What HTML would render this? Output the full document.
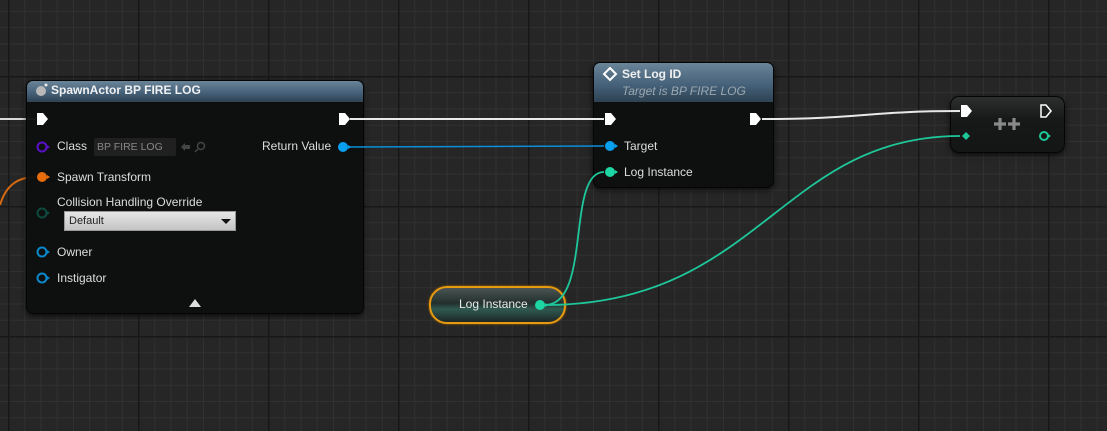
<!DOCTYPE html>
<html><head><style>
html,body{margin:0;padding:0;width:1107px;height:431px;overflow:hidden;background:#262626;font-family:"Liberation Sans",sans-serif;}
.bg{position:absolute;left:0;top:0;width:1107px;height:431px;
background-image:
linear-gradient(to right,#181818 0,#181818 1.5px,transparent 1.5px),
linear-gradient(to bottom,#181818 0,#181818 1.5px,transparent 1.5px),
linear-gradient(to right,#313131 0,#313131 1px,transparent 1px),
linear-gradient(to bottom,#313131 0,#313131 1px,transparent 1px);
background-size:130px 130px,130px 130px,16.25px 16.25px,16.25px 16.25px;
background-position:8px 76px,8px 76px,8px 76px,8px 76px;}
.node{position:absolute;background:rgba(14,16,15,0.96);border-radius:7px;box-shadow:0 2px 6px rgba(0,0,0,.7);border:1px solid #050505;}
.hdr{position:absolute;left:0;top:0;right:0;border-radius:6px 6px 0 0;background:linear-gradient(to bottom,#6a8498,#46627a 55%,#2e4252);}
.t{position:absolute;color:#ddd;font-size:12px;white-space:nowrap;}
.b{font-weight:bold;color:#f0f0f0;}
svg{position:absolute;left:0;top:0;}
</style></head><body>
<div class="bg"></div>
<svg width="1107" height="431">
<path d="M0,119 L36,119" stroke="#d8d8d8" stroke-width="2" fill="none"/>
<path d="M0,205 C6,185 18,177 36,177" stroke="#d86a10" stroke-width="2" fill="none"/>
</svg>

<div class="node" style="left:26px;top:80px;width:336px;height:232px;">
<div class="hdr" style="height:21px;"></div>
</div>
<div class="node" style="left:593px;top:62px;width:179px;height:124px;">
<div class="hdr" style="height:39px;"></div>
</div>
<div class="node" style="left:950px;top:96px;width:113px;height:55px;background:linear-gradient(#2e2f2f,#171818 40%,#141515);border-radius:9px;"></div>
<div style="position:absolute;left:429px;top:286px;width:133px;height:34px;border-radius:18px;border:2px solid #e69a10;background:linear-gradient(#4a5452,#22302d 45%,#2f5a50 62%,#1d2624);box-shadow:0 0 2px #b06800;"></div>

<svg width="1107" height="431">
<path d="M350,119 L604,119" stroke="#e8e8e8" stroke-width="2" fill="none"/>
<path d="M762,119 C860,119 870,111 960,111" stroke="#e8e8e8" stroke-width="2" fill="none"/>
<path d="M349,147 L604,146" stroke="#0a8fd8" stroke-width="1.6" fill="none"/>
<path d="M545,305 C592,305 566,172 604,172" stroke="#1ec79a" stroke-width="1.8" fill="none"/>
<path d="M545,305 C760,305 780,136 960,136" stroke="#1ec79a" stroke-width="1.8" fill="none"/>
<path d="M37,113 h6 l5,6 l-5,6 h-6z" fill="#fff"/>
<path d="M339,113 h6 l5,6 l-5,6 h-6z" fill="#fff"/>
<circle cx="42" cy="147" r="4.5" fill="none" stroke="#5a10c8" stroke-width="2"/><path d="M47,145 l3,2 l-3,2z" fill="#5a10c8"/>
<circle cx="343" cy="147" r="5" fill="#0aa0f0"/><path d="M348,145 l3,2 l-3,2z" fill="#0aa0f0"/>
<circle cx="42" cy="177" r="5" fill="#e66c0c"/><path d="M47,175 l3,2 l-3,2z" fill="#e66c0c"/>
<circle cx="42" cy="213" r="4.5" fill="none" stroke="#0d4a3e" stroke-width="2"/><path d="M47,211 l3,2 l-3,2z" fill="#0d4a3e"/>
<circle cx="42" cy="252" r="4.5" fill="none" stroke="#0a88cc" stroke-width="2"/><path d="M47,250 l3,2 l-3,2z" fill="#0a88cc"/>
<circle cx="42" cy="278" r="4.5" fill="none" stroke="#0a88cc" stroke-width="2"/><path d="M47,276 l3,2 l-3,2z" fill="#0a88cc"/>
<path d="M189,307 l6,-8 l6,8z" fill="#ddd"/>
<circle cx="41" cy="91" r="5" fill="#b8b8b8"/><circle cx="46" cy="85" r="1.5" fill="#eee"/>
<path d="M181,147 l4,-4 v2 h5 v4 h-5 v2z" fill="#444"/><circle cx="201" cy="146" r="3.5" fill="none" stroke="#444" stroke-width="1.5"/><path d="M198,149 l-3,3" stroke="#444" stroke-width="1.5"/>
<path d="M163,146 h8 l-4,4z" fill="#999"/>
<path d="M610,68 l6,6 l-6,6 l-6,-6z" fill="none" stroke="#fff" stroke-width="2"/>
<path d="M605,113 h6 l5,6 l-5,6 h-6z" fill="#fff"/>
<path d="M750,113 h6 l5,6 l-5,6 h-6z" fill="#fff"/>
<circle cx="610" cy="146" r="5" fill="#0aa0f0"/><path d="M615,144 l3,2 l-3,2z" fill="#0aa0f0"/>
<circle cx="610" cy="172" r="5" fill="#1ed6a4"/><path d="M615,170 l3,2 l-3,2z" fill="#1ed6a4"/>
<path d="M961,105 h6 l5,6 l-5,6 h-6z" fill="#fff"/>
<path d="M1041,105 h5 l5,6 l-5,6 h-5z" fill="none" stroke="#fff" stroke-width="1.5"/>
<path d="M966,132 l4,4 l-4,4 l-4,-4z" fill="#1ec79a"/>
<circle cx="1044" cy="136" r="4" fill="none" stroke="#1ec79a" stroke-width="2"/><path d="M1048,134 l3,2 l-3,2z" fill="#1ec79a"/>
<path d="M994,124 h12 M1000,118 v12 M1008,124 h12 M1014,118 v12" stroke="#8a8a8a" stroke-width="3.2"/>
<circle cx="540" cy="305" r="5" fill="#1ed6a4"/><path d="M545,303 l3,2 l-3,2z" fill="#1ed6a4"/>
</svg>

<div class="t b" style="left:51px;top:83px;">SpawnActor BP FIRE LOG</div>
<div class="t" style="left:57px;top:139px;">Class</div>
<div style="position:absolute;left:94px;top:138px;width:82px;height:18px;background:#202020;border-radius:2px;"></div>
<div class="t" style="left:97px;top:141px;font-size:10.5px;color:#888;">BP FIRE LOG</div>
<div class="t" style="left:262px;top:139px;">Return Value</div>
<div class="t" style="left:57px;top:170px;">Spawn Transform</div>
<div class="t" style="left:57px;top:195px;">Collision Handling Override</div>
<div style="position:absolute;left:64px;top:211px;width:172px;height:20px;background:linear-gradient(#e6e6e6,#c4c4c4);border:1px solid #999;box-sizing:border-box;"></div>
<div class="t" style="left:69px;top:215px;color:#222;font-size:11px;">Default</div>
<div style="position:absolute;left:221px;top:219px;border-left:5px solid transparent;border-right:5px solid transparent;border-top:5px solid #111;"></div>
<div class="t" style="left:57px;top:245px;">Owner</div>
<div class="t" style="left:57px;top:271px;">Instigator</div>

<div class="t b" style="left:622px;top:67px;">Set Log ID</div>
<div class="t" style="left:622px;top:84px;font-style:italic;color:#9aa8b0;">Target is BP FIRE LOG</div>
<div class="t" style="left:624px;top:139px;">Target</div>
<div class="t" style="left:624px;top:165px;">Log Instance</div>

<div class="t" style="left:459px;top:297px;color:#e8e8e8;">Log Instance</div>
</body></html>
